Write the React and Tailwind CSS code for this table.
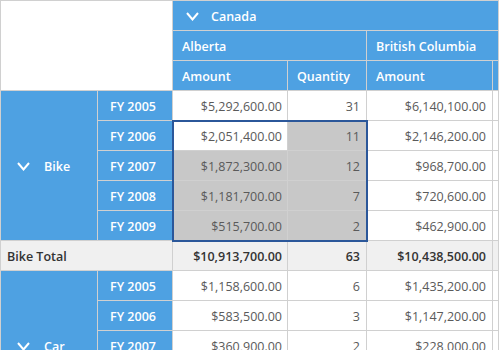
import React from "react";

const bike = [
    ["FY 2005", "$5,292,600.00", "31", "$6,140,100.00"],
    ["FY 2006", "$2,051,400.00", "11", "$2,146,200.00"],
    ["FY 2007", "$1,872,300.00", "12", "$968,700.00"],
    ["FY 2008", "$1,181,700.00", "7", "$720,600.00"],
    ["FY 2009", "$515,700.00", "2", "$462,900.00"],
];

const car = [
    ["FY 2005", "$1,158,600.00", "6", "$1,435,200.00"],
    ["FY 2006", "$583,500.00", "3", "$1,147,200.00"],
    ["FY 2007", "$360,900.00", "2", "$228,000.00"],
    ["FY 2008", "$412,300.00", "4", "$318,400.00"],
    ["FY 2009", "$205,100.00", "1", "$96,500.00"],
];

// cells that sit inside the selection (row index in bike, column 1=amount 2=qty)
const selected = (r, c) => r >= 1 && r <= 4 && !(r === 1 && c === 1);

function Chevron() {
    return (
        <svg width="13" height="9" viewBox="0 0 13 9" className="shrink-0 -mt-[2px]">
            <polyline points="1,1 6.5,7.5 12,1" fill="none" stroke="white" strokeWidth="2" />
        </svg>
    );
}

function Group({ name, rows, startRow, sel }) {
    const head = "bg-[#4ea1e2] text-white font-semibold";
    return (
        <>
            <div className={`${head} col-start-1 flex items-center gap-[14px] pl-[16px]`} style={{ gridRow: `${startRow} / span ${rows.length}` }}>
                <Chevron />
                <span>{name}</span>
            </div>
            {rows.map((r, i) => (
                <React.Fragment key={r[0]}>
                    <div className={`${head} col-start-2 flex items-center justify-center pr-[4px]`} style={{ gridRow: startRow + i }}>{r[0]}</div>
                    <div className={`${sel && selected(i, 1) ? "bg-[#c8c8c8]" : "bg-white"} col-start-3 flex items-center justify-end pr-[5px] text-[#5a5a5a]`} style={{ gridRow: startRow + i }}>{r[1]}</div>
                    <div className={`${sel && selected(i, 2) ? "bg-[#c8c8c8]" : "bg-white"} col-start-4 flex items-center justify-end pr-[6px] text-[#5a5a5a]`} style={{ gridRow: startRow + i }}>{r[2]}</div>
                    <div className="bg-white col-start-5 flex items-center justify-end pr-[6px] text-[#5a5a5a]" style={{ gridRow: startRow + i }}>{r[3]}</div>
                    <div className="bg-white col-start-6" style={{ gridRow: startRow + i }}></div>
                </React.Fragment>
            ))}
        </>
    );
}

export default function App() {
    const head = "bg-[#4ea1e2] text-white font-semibold flex items-center";
    return (
        <div className="w-[500px] h-[350px] overflow-hidden bg-white" style={{ fontFamily: '"Open Sans", "Noto Sans", sans-serif' }}>
            <div className="relative grid grid-cols-[96px_74px_114px_78px_125px_5px] auto-rows-[29px] gap-px p-px bg-[#d0d0d0] w-[499px] text-[12.5px] [&>div]:pt-[3px]">
                <div className="bg-white col-start-1 col-span-2 row-start-1 row-span-3"></div>
                <div className={`${head} col-start-3 col-span-4 row-start-1 gap-[12px] pl-[13px]`}>
                    <Chevron />
                    <span>Canada</span>
                </div>
                <div className={`${head} col-start-3 col-span-2 row-start-2 pl-[9px]`}>Alberta</div>
                <div className={`${head} col-start-5 col-span-2 row-start-2 pl-[9px]`}>British Columbia</div>
                <div className={`${head} col-start-3 row-start-3 pl-[9px]`}>Amount</div>
                <div className={`${head} col-start-4 row-start-3 pl-[9px]`}>Quantity</div>
                <div className={`${head} col-start-5 row-start-3 pl-[9px]`}>Amount</div>
                <div className={`${head} col-start-6 row-start-3`}></div>

                <Group name="Bike" rows={bike} startRow={4} sel />

                <div className="bg-[#f0f0f0] col-start-1 col-span-2 row-start-9 flex items-center pl-[6px] font-semibold text-[#333]">Bike Total</div>
                <div className="bg-[#f0f0f0] col-start-3 row-start-9 flex items-center justify-end pr-[5px] font-semibold text-[#333]">$10,913,700.00</div>
                <div className="bg-[#f0f0f0] col-start-4 row-start-9 flex items-center justify-end pr-[6px] font-semibold text-[#333]">63</div>
                <div className="bg-[#f0f0f0] col-start-5 row-start-9 flex items-center justify-end pr-[6px] font-semibold text-[#333]">$10,438,500.00</div>
                <div className="bg-[#f0f0f0] col-start-6 row-start-9"></div>

                <Group name="Car" rows={car} startRow={10} />

                <div className="absolute left-[172px] top-[120px] w-[196px] h-[122px] border-2 border-[#2b579a] pointer-events-none !pt-0"></div>
            </div>
        </div>
    );
}
